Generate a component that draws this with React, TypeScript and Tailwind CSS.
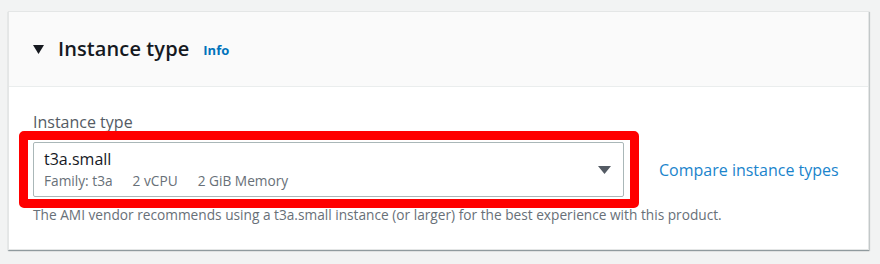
export default function App() {
  return (
    <div className="h-[264px] w-[880px] bg-[#f2f3f3] pl-[8px] pt-[11px]" style={{ fontFamily: '"Open Sans", "Noto Sans", sans-serif' }}>
      <div className="w-[861px] border border-[#e4e6e6] bg-white shadow-[0_1px_1px_0_rgba(0,28,36,0.3),1px_1px_1px_0_rgba(0,28,36,0.15)]">
        <div className="flex h-[75px] items-center border-b border-[#eaeded] bg-[#fafafa] pl-[24px]">
          <svg width="11" height="9" viewBox="0 0 11 9" className="mr-[14px]">
            <path d="M0 0 L11 0 L5.5 9 Z" fill="#16191f" />
          </svg>
          <h2 className="text-[20px] font-semibold tracking-[0.1px] text-[#16191f]">Instance type</h2>
          <a className="ml-[14px] mt-[3px] text-[13px] font-bold text-[#0073bb]">Info</a>
        </div>
        <div className="px-[24px] pb-[26px] pt-[26px]">
          <div className="text-[16px] leading-[18px] text-[#545b64]">Instance type</div>
          <div className="flex items-center">
            <div className="-ml-[14px] rounded-[5px] border-[9px] border-[#ff0000] py-[2px] pl-[5px] pr-[6px]">
              <div className="flex h-[55px] w-[591px] items-center rounded-[2px] border border-[#aab7b8] bg-white pl-[10px] pr-[12px]">
                <div className="flex-1">
                  <div className="text-[16px] leading-[20px] text-[#16191f]">t3a.small</div>
                  <div className="mt-[3px] flex gap-[20px] text-[13.7px] leading-[18px] text-[#687078]">
                    <span>Family: t3a</span>
                    <span>2 vCPU</span>
                    <span>2 GiB Memory</span>
                  </div>
                </div>
                <svg width="13" height="8" viewBox="0 0 13 8">
                  <path d="M0 0 L13 0 L6.5 8 Z" fill="#545b64" />
                </svg>
              </div>
            </div>
            <a className="ml-[20px] text-[16px] text-[#1a84cc]">Compare instance types</a>
          </div>
          <div className="-mt-[1px] text-[13.7px] leading-[16px] text-[#687078]">
            The AMI vendor recommends using a t3a.small instance (or larger) for the best experience with this product.
          </div>
        </div>
      </div>
    </div>
  )
}
